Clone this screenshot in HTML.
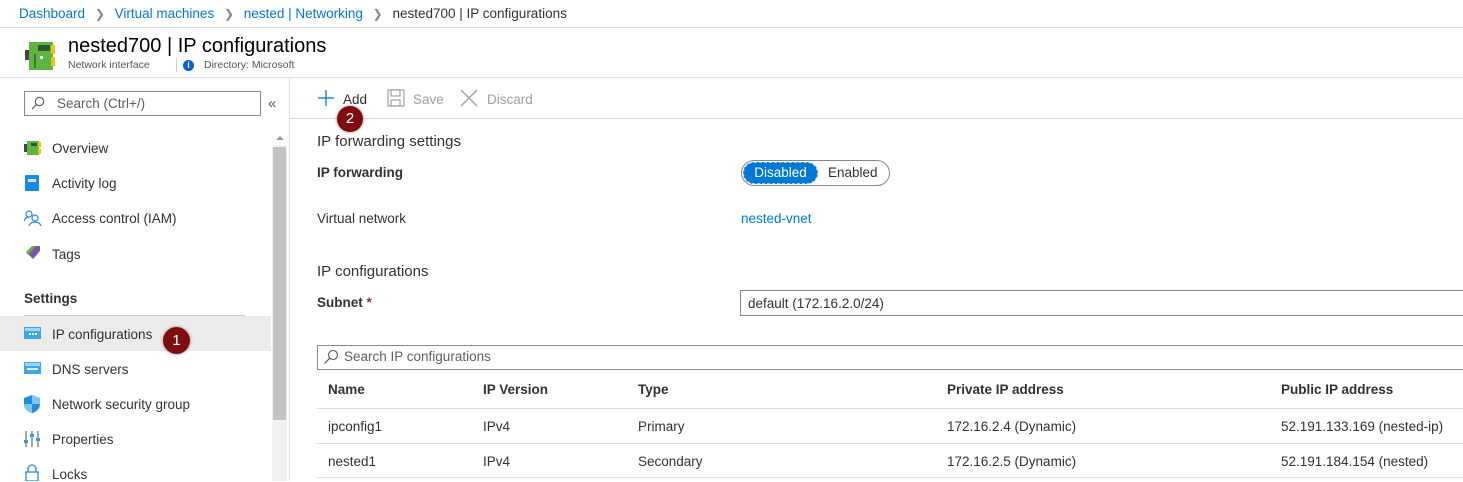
<!DOCTYPE html>
<html><head><meta charset="utf-8"><style>
*{box-sizing:border-box;margin:0;padding:0}
body{width:1463px;height:481px;overflow:hidden;background:#fff;font-family:"Liberation Sans",sans-serif;font-size:13px;color:#323130;position:relative}
.a{position:absolute;white-space:nowrap}
.lk{color:#0078d4}
.bc{top:0;left:0;width:1463px;height:28px;border-bottom:1px solid #e1dfdd;background:#fff}
.mi{left:52px;font-size:13.5px}
.badge{position:absolute;border-radius:50%;background:#7e0e0e;color:#fff;text-align:center;font-size:15px;box-shadow:0 0 3px #888}
.th{font-weight:bold;color:#323130}
.hl{position:absolute;left:317px;right:0;height:1px;background:#e1dfdd}
.sep{color:#888;margin:0 6px;font-size:12px}
</style></head><body>
<div class="a bc"></div>
<div class="a" style="left:19px;top:6px;font-size:13.5px"><span class="lk">Dashboard</span> <span class="sep">&#x276F;</span> <span class="lk">Virtual machines</span> <span class="sep">&#x276F;</span> <span class="lk">nested | Networking</span> <span class="sep">&#x276F;</span> nested700 | IP configurations</div>

<svg class="a" style="left:24px;top:40px" width="32" height="32" viewBox="0 0 32 32"><rect x="1" y="10" width="4" height="10" fill="#444"/><rect x="5" y="2" width="24" height="28" fill="#5fb443"/><rect x="14" y="5" width="12" height="6" fill="#2a5a2a"/><rect x="27" y="5" width="4" height="9" fill="#f4c20d"/><rect x="27" y="17" width="4" height="9" fill="#f4c20d"/><rect x="10" y="14" width="2" height="14" fill="#3a7a2a"/><rect x="16" y="16" width="3" height="3" fill="#fff"/></svg>
<div class="a" style="left:68px;top:35px;font-size:20px;color:#000">nested700 | IP configurations</div>
<div class="a" style="left:68px;top:59px;font-size:10.5px;color:#555">Network interface</div>
<div class="a" style="left:176px;top:58px;width:1px;height:14px;background:#ccc"></div>
<div class="a" style="left:183px;top:60px;width:11px;height:11px;border-radius:50%;background:#0062d0;color:#fff;font-size:9px;text-align:center;line-height:11px;font-weight:bold">i</div>
<div class="a" style="left:204px;top:59px;font-size:10.5px;color:#555">Directory: Microsoft</div>
<div class="a" style="left:0;top:77px;width:1463px;height:1px;background:#e1dfdd"></div>

<div class="a" style="left:289px;top:78px;width:1px;height:403px;background:#e1dfdd"></div>
<div class="a" style="left:24px;top:91px;width:237px;height:25px;border:1px solid #8a8886"></div>
<svg class="a" style="left:31px;top:96px" width="14" height="14" viewBox="0 0 14 14"><circle cx="8.5" cy="5.5" r="4.2" fill="none" stroke="#555" stroke-width="1.1"/><line x1="5.5" y1="8.5" x2="1" y2="13" stroke="#555" stroke-width="1.2"/></svg>
<div class="a" style="left:57px;top:96px;font-size:13.5px;color:#605e5c">Search (Ctrl+/)</div>
<div class="a" style="left:268px;top:95px;font-size:15px;color:#555">«</div>
<div class="a" style="left:272px;top:145px;width:15px;height:336px;background:#f1f1f1"></div>
<div class="a" style="left:273px;top:147px;width:13px;height:273px;background:#c3c3c3"></div>
<div class="a" style="left:276px;top:136px;width:0;height:0;border-left:4px solid transparent;border-right:4px solid transparent;border-bottom:4px solid #999"></div>

<svg class="a" style="left:24px;top:140px" width="17" height="16"><rect x="0" y="4" width="3" height="8" fill="#444"/><rect x="3" y="1" width="12" height="14" fill="#5fb443"/><rect x="7" y="3" width="6" height="3" fill="#2a5a2a"/><rect x="14" y="2" width="3" height="5" fill="#f4c20d"/><rect x="14" y="9" width="3" height="5" fill="#f4c20d"/></svg>
<div class="a mi" style="top:141px">Overview</div>
<svg class="a" style="left:25px;top:175px" width="14" height="16"><rect x="0" y="0" width="14" height="16" rx="1" fill="#1e88e5"/><rect x="3" y="4" width="8" height="3" fill="#cfe5fb"/></svg>
<div class="a mi" style="top:176px">Activity log</div>
<svg class="a" style="left:24px;top:210px" width="18" height="16" fill="none" stroke="#2a8ad8" stroke-width="1.2"><circle cx="5" cy="4" r="3"/><path d="M0 11c1-3 3-4 5-4"/><circle cx="11" cy="8" r="3"/><path d="M5 16c1-3 3-4 6-4s5 1 6 4"/></svg>
<div class="a mi" style="top:211px">Access control (IAM)</div>
<svg class="a" style="left:24px;top:245px" width="17" height="16"><path d="M4 9L11 1h5v5l-7 8z" fill="#7f4fb0"/><path d="M2 7L8 1h4L4 10z" fill="#5fb443"/></svg>
<div class="a mi" style="top:247px">Tags</div>
<div class="a" style="left:24px;top:291px;font-size:13.5px;font-weight:bold">Settings</div>
<div class="a" style="left:24px;top:315px;width:221px;height:1px;background:#c8c6c4"></div>
<div class="a" style="left:0;top:316px;width:271px;height:35px;background:#edebe9"></div>
<svg class="a" style="left:24px;top:327px" width="17" height="12"><rect width="17" height="12" fill="#3ba7e6"/><rect x="1" y="1" width="15" height="3" fill="#9ed6f5"/><rect x="5" y="6" width="2" height="2" fill="#fff"/><rect x="8" y="6" width="2" height="2" fill="#fff"/><rect x="11" y="6" width="2" height="2" fill="#fff"/></svg>
<div class="a mi" style="top:327px">IP configurations</div>
<div class="badge" style="left:163px;top:327px;width:27px;height:27px;line-height:27px">1</div>
<svg class="a" style="left:24px;top:362px" width="17" height="12"><rect width="17" height="12" fill="#3ba7e6"/><rect x="1" y="1" width="15" height="3" fill="#9ed6f5"/><rect x="3" y="6" width="11" height="2" fill="#d9f0fc"/></svg>
<div class="a mi" style="top:362px">DNS servers</div>
<svg class="a" style="left:24px;top:395px" width="16" height="18"><path d="M8 0L16 3v6c0 5-4 8-8 9C4 17 0 14 0 9V3z" fill="#1f8ee0"/><path d="M8 0L16 3v6H8z" fill="#7cc6f2"/><path d="M0 9h8v9C4 17 0 14 0 9z" fill="#7cc6f2"/></svg>
<div class="a mi" style="top:397px">Network security group</div>
<svg class="a" style="left:24px;top:431px" width="16" height="16"><rect x="1" y="0" width="2" height="16" fill="#9aa"/><rect x="7" y="0" width="2" height="16" fill="#9aa"/><rect x="13" y="0" width="2" height="16" fill="#9aa"/><rect x="0" y="9" width="4" height="3" fill="#3a96dd"/><rect x="6" y="3" width="4" height="3" fill="#3a96dd"/><rect x="12" y="7" width="4" height="3" fill="#3a96dd"/></svg>
<div class="a mi" style="top:432px">Properties</div>
<svg class="a" style="left:25px;top:464px" width="14" height="17" fill="none" stroke="#2a8ad8" stroke-width="1.3"><path d="M3 8V5a4 4 0 018 0v3"/><rect x="1" y="8" width="12" height="9"/></svg>
<div class="a mi" style="top:467px">Locks</div>

<svg class="a" style="left:318px;top:90px" width="16" height="16" stroke="#0078d4" stroke-width="1.3"><line x1="8" y1="0" x2="8" y2="16"/><line x1="0" y1="8" x2="16" y2="8"/></svg>
<div class="a" style="left:343px;top:92px;font-size:13.5px">Add</div>
<svg class="a" style="left:387px;top:89px" width="18" height="18" fill="none" stroke="#a19f9d" stroke-width="1.2"><rect x="1" y="1" width="16" height="16"/><rect x="4" y="1" width="9" height="6"/><rect x="4" y="11" width="9" height="6"/></svg>
<div class="a" style="left:413px;top:92px;font-size:13.5px;color:#a19f9d">Save</div>
<svg class="a" style="left:460px;top:89px" width="18" height="18" stroke="#a19f9d" stroke-width="1.3"><line x1="1" y1="1" x2="17" y2="17"/><line x1="17" y1="1" x2="1" y2="17"/></svg>
<div class="a" style="left:487px;top:92px;font-size:13.5px;color:#a19f9d">Discard</div>
<div class="a" style="left:290px;top:118px;width:1173px;height:1px;background:#d6d6d6"></div>
<div class="badge" style="left:337px;top:106px;width:26px;height:26px;line-height:26px">2</div>

<div class="a" style="left:317px;top:133px;font-size:15px">IP forwarding settings</div>
<div class="a" style="left:317px;top:165px;font-size:13.5px;font-weight:bold;color:#323130">IP forwarding</div>
<div class="a" style="left:741px;top:160px;width:149px;height:26px;border:1px solid #8a8886;border-radius:13px"></div>
<div class="a" style="left:743px;top:162px;width:75px;height:22px;border-radius:11px;background:#0078d4;border:1px dashed #9cd0ff;color:#fff;text-align:center;line-height:20px;font-size:13.5px">Disabled</div>
<div class="a" style="left:828px;top:165px;font-size:13.5px">Enabled</div>
<div class="a" style="left:317px;top:211px;font-size:13.5px">Virtual network</div>
<div class="a lk" style="left:741px;top:211px;font-size:13.5px">nested-vnet</div>

<div class="a" style="left:317px;top:263px;font-size:15px">IP configurations</div>
<div class="a" style="left:317px;top:295px;font-size:13.5px;font-weight:bold">Subnet <span style="color:#a4262c">*</span></div>
<div class="a" style="left:740px;top:290px;width:730px;height:26px;border:1px solid #8a8886"></div>
<div class="a" style="left:748px;top:296px;font-size:13.5px">default (172.16.2.0/24)</div>

<div class="a" style="left:317px;top:345px;width:1160px;height:25px;border:1px solid #8a8886"></div>
<svg class="a" style="left:323px;top:349px" width="16" height="16"><circle cx="10" cy="6" r="4.5" fill="none" stroke="#555" stroke-width="1.1"/><line x1="6.8" y1="9.2" x2="1.5" y2="14.5" stroke="#555" stroke-width="1.2"/></svg>
<div class="a" style="left:344px;top:349px;font-size:13.5px;color:#605e5c">Search IP configurations</div>

<div class="a th" style="left:328px;top:382px;font-size:13.5px">Name</div>
<div class="a th" style="left:483px;top:382px;font-size:13.5px">IP Version</div>
<div class="a th" style="left:638px;top:382px;font-size:13.5px">Type</div>
<div class="a th" style="left:947px;top:382px;font-size:13.5px">Private IP address</div>
<div class="a th" style="left:1281px;top:382px;font-size:13.5px">Public IP address</div>
<div class="hl" style="top:408px"></div>
<div class="a" style="left:328px;top:419px;font-size:13.5px">ipconfig1</div>
<div class="a" style="left:483px;top:419px;font-size:13.5px">IPv4</div>
<div class="a" style="left:638px;top:419px;font-size:13.5px">Primary</div>
<div class="a" style="left:947px;top:419px;font-size:13.5px">172.16.2.4 (Dynamic)</div>
<div class="a" style="left:1281px;top:419px;font-size:13.5px">52.191.133.169 (nested-ip)</div>
<div class="hl" style="top:443px"></div>
<div class="a" style="left:328px;top:454px;font-size:13.5px">nested1</div>
<div class="a" style="left:483px;top:454px;font-size:13.5px">IPv4</div>
<div class="a" style="left:638px;top:454px;font-size:13.5px">Secondary</div>
<div class="a" style="left:947px;top:454px;font-size:13.5px">172.16.2.5 (Dynamic)</div>
<div class="a" style="left:1281px;top:454px;font-size:13.5px">52.191.184.154 (nested)</div>
<div class="hl" style="top:477px"></div>
</body></html>
